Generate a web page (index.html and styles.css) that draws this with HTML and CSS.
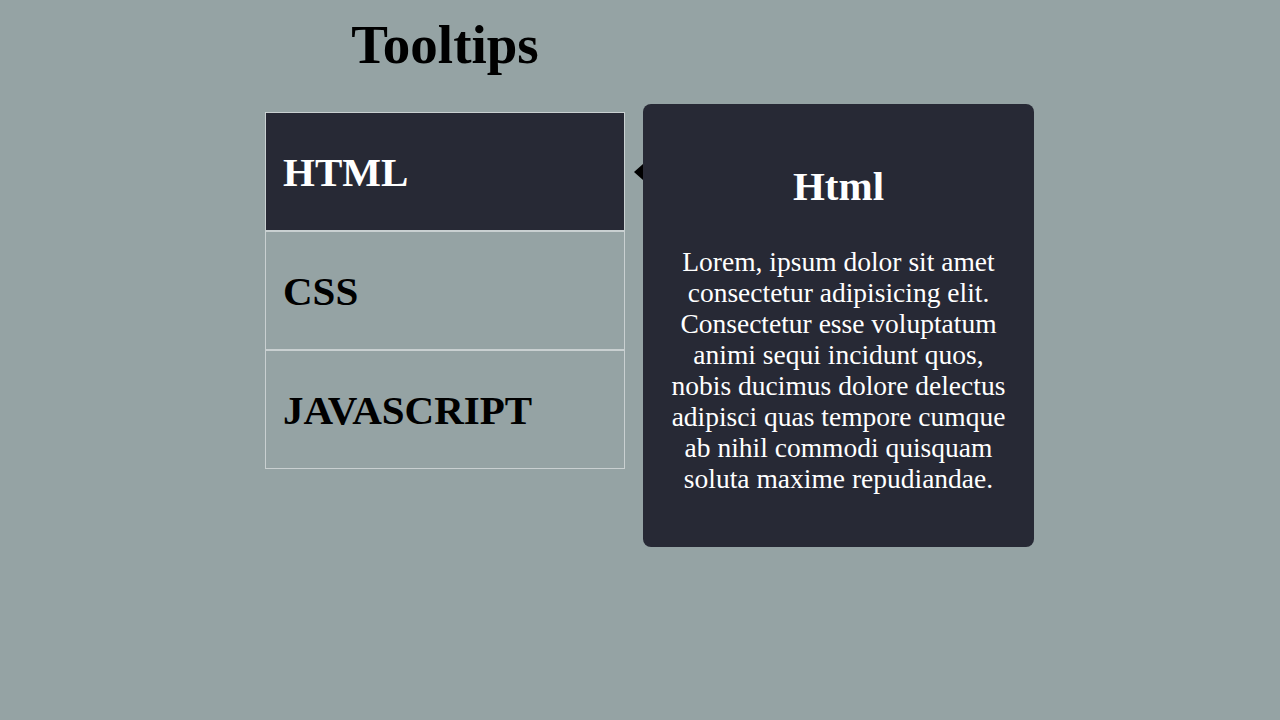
FILE: index.html
```html
<!DOCTYPE html>
<html>
<head>
<meta charset="utf-8">
<link rel="stylesheet" href="styles.css">
</head>
<body>
<div class="wrap">
  <h1 class="title">Tooltips</h1>
  <ul class="menu">
    <li class="item active">HTML
      <div class="tooltip">
        <h2 class="tip-title">Html</h2>
        <p class="tip-text">Lorem, ipsum dolor sit amet consectetur adipisicing elit. Consectetur esse voluptatum animi sequi incidunt quos, nobis ducimus dolore delectus adipisci quas tempore cumque ab nihil commodi quisquam soluta maxime repudiandae.</p>
      </div>
    </li>
    <li class="item">CSS</li>
    <li class="item">JAVASCRIPT</li>
  </ul>
</div>
</body>
</html>
```

FILE: styles.css
```css
html, body {
  margin: 0;
  padding: 0;
}
body {
  background: #95a3a4;
  font-family: "Liberation Serif", "Times New Roman", serif;
  height: 720px;
  overflow: hidden;
}
.wrap {
  width: 360px;
  margin-left: 265px;
  padding-top: 13px;
}
.title {
  margin: 0;
  font-size: 55px;
  font-weight: bold;
  text-align: center;
  color: #000;
  line-height: normal;
}
.menu {
  list-style: none;
  margin: 36px 0 0 0;
  padding: 0;
  border: 1px solid #c9d0d1;
  position: relative;
}
.item {
  position: relative;
  height: 119px;
  box-sizing: border-box;
  padding: 0 0 0 17px;
  display: flex;
  align-items: center;
  font-size: 41px;
  font-weight: bold;
  color: #000;
  border-top: 2px solid #c9d0d1;
}
.item:first-child {
  border-top: none;
  height: 117px;
}
.item.active {
  background: #272935;
  color: #fff;
}
.tooltip {
  position: absolute;
  left: 377px;
  top: -9px;
  width: 391px;
  height: 443px;
  box-sizing: border-box;
  background: #272935;
  border-radius: 8px;
  padding: 28px 28px;
  text-align: center;
  color: #fff;
  font-weight: normal;
}
.tooltip::before {
  content: "";
  position: absolute;
  left: -9px;
  top: 60px;
  border-style: solid;
  border-width: 8px 9px 8px 0;
  border-color: transparent #000 transparent transparent;
}
.tip-title {
  margin: 30px 0 0 0;
  font-size: 41px;
  font-weight: bold;
  line-height: normal;
}
.tip-text {
  margin: 36px 0 0 0;
  font-size: 27.5px;
  line-height: 31px;
}
```
